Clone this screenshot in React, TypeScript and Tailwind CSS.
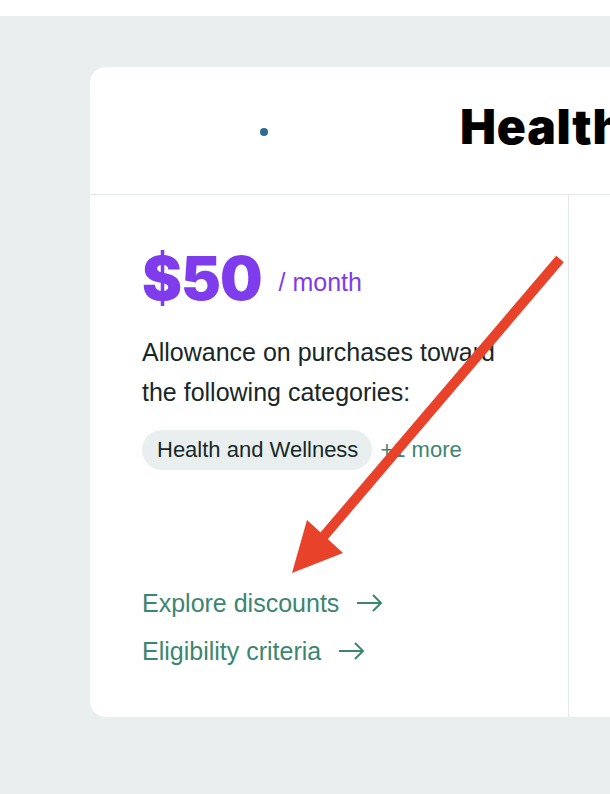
import React from 'react';

const Arrow = () => (
  <svg width="27" height="18" viewBox="0 0 27 18" fill="none" className="shrink-0">
    <path d="M1 9h24M17 1l8 8-8 8" stroke="currentColor" strokeWidth="2" />
  </svg>
);

export default function App() {
  return (
    <div className="relative w-[610px] h-[794px] overflow-hidden bg-white flex flex-col pt-4 font-['Liberation_Sans',Arial,sans-serif]">
      <div className="flex-1 bg-[#e9efef] pl-[90px] pt-[51px]">
        <div className="w-[720px] h-[650px] bg-white rounded-2xl flex flex-col">
          {/* header */}
          <div className="h-[128px] border-b border-[#e2e6e6] flex items-center">
            <span className="shrink-0 ml-[170px] w-[8px] h-[8px] rounded-full bg-[#2f6b8f] mt-[3px]" />
            <h1 className="shrink-0 ml-[192px] whitespace-nowrap text-[48px] leading-none font-black text-black font-['Inter',sans-serif] tracking-[0.8px] -mt-[8px]">
              Health and Wellness
            </h1>
          </div>

          {/* body */}
          <div className="flex-1 grid grid-cols-[479px_1fr]">
            <div className="border-r border-[#e2e6e6] pl-[52px] pt-[54px] pb-[52px] flex flex-col">
              <div className="flex items-baseline gap-[17px]">
                <span className="text-[60px] leading-[58px] font-black text-[#7f3ced] font-['Inter',sans-serif] tracking-[-1px]">
                  $50
                </span>
                <span className="text-[25px] text-[#7f3ced] -translate-y-[9px]">/ month</span>
              </div>
              <p className="mt-[21px] w-[370px] text-[25px] leading-[40px] text-[#182828]">
                Allowance on purchases toward the following categories:
              </p>
              <div className="mt-[18px] flex items-center gap-2">
                <span className="h-10 flex items-center rounded-full bg-[#e9efef] pl-[15px] pr-[14px] text-[22px] text-[#182828]">
                  Health and Wellness
                </span>
                <span className="text-[22px] text-[#3c8571]">+1 more</span>
              </div>
              <div className="mt-auto flex flex-col gap-[20px] text-[#3c8571]">
                <a className="flex items-center gap-[17px] text-[25px] leading-[28px]">
                  Explore discounts <Arrow />
                </a>
                <a className="flex items-center gap-[17px] text-[25px] leading-[28px]">
                  Eligibility criteria <Arrow />
                </a>
              </div>
            </div>
            <div />
          </div>
        </div>
      </div>

      {/* annotation arrow */}
      <svg className="absolute inset-0 pointer-events-none" width="610" height="794" viewBox="0 0 610 794">
        <line x1="560" y1="259" x2="318" y2="543" stroke="#e8432a" strokeWidth="10" />
        <polygon points="292,573 307,520 343,553" fill="#e8432a" />
      </svg>
    </div>
  );
}
